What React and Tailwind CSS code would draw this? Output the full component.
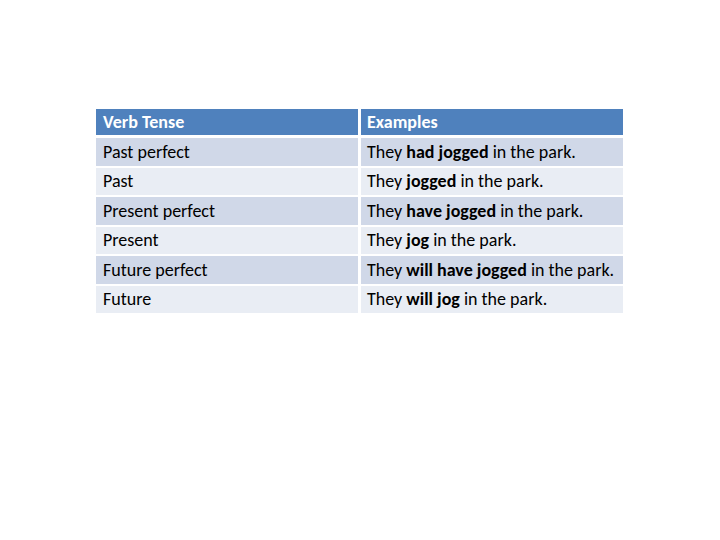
const rows = [
  ["Past perfect", <>They <b>had jogged</b> in the park.</>],
  ["Past", <>They <b>jogged</b> in the park.</>],
  ["Present perfect", <>They <b>have jogged</b> in the park.</>],
  ["Present", <>They <b>jog</b> in the park.</>],
  ["Future perfect", <>They <b>will have jogged</b> in the park.</>],
  ["Future", <>They <b>will jog</b> in the park.</>],
];

export default function App() {
  return (
    <div className="w-[720px] h-[540px] bg-white pt-[109px] pl-[96px]" style={{ fontFamily: "Carlito, 'Open Sans', 'Liberation Sans', sans-serif" }}>
      <div className="grid grid-cols-[262px_262px] gap-x-[3px] gap-y-[2px] w-[527px] text-[18px] leading-none text-black">
        <div className="bg-[#4f81bd] h-[26px] flex items-center pl-[7px] text-white font-semibold"><span>Verb Tense</span></div>
        <div className="bg-[#4f81bd] h-[26px] flex items-center pl-[6px] text-white font-semibold"><span>Examples</span></div>
        {rows.map(([tense, ex], i) => {
          const bg = i % 2 === 0 ? "bg-[#d0d8e8]" : "bg-[#e9edf4]";
          const mt = i === 0 ? "mt-[1px]" : "";
          return [
            <div key={"a" + i} className={`${bg} ${mt} h-[27.5px] flex items-center pl-[7px]`}><span>{tense}</span></div>,
            <div key={"b" + i} className={`${bg} ${mt} h-[27.5px] flex items-center pl-[6px]`}><span>{ex}</span></div>,
          ];
        })}
      </div>
    </div>
  );
}
